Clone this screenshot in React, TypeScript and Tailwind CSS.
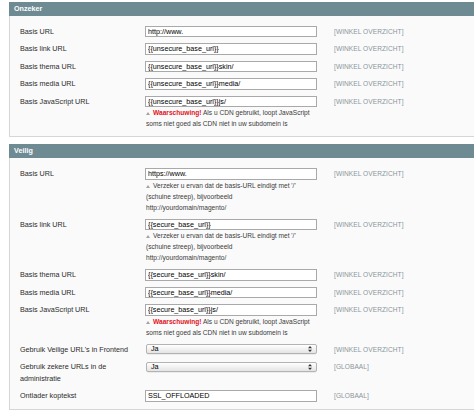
import React from "react";

type Row = {
  label: string;
  value: string;
  scope: string;
  kind?: "input" | "select";
  hint?: "base" | "cdn";
};

const onzeker: Row[] = [
  { label: "Basis URL", value: "http://www.", scope: "[WINKEL OVERZICHT]" },
  { label: "Basis link URL", value: "{{unsecure_base_url}}", scope: "[WINKEL OVERZICHT]" },
  { label: "Basis thema URL", value: "{{unsecure_base_url}}skin/", scope: "[WINKEL OVERZICHT]" },
  { label: "Basis media URL", value: "{{unsecure_base_url}}media/", scope: "[WINKEL OVERZICHT]" },
  { label: "Basis JavaScript URL", value: "{{unsecure_base_url}}js/", scope: "[WINKEL OVERZICHT]", hint: "cdn" },
];

const veilig: Row[] = [
  { label: "Basis URL", value: "https://www.", scope: "[WINKEL OVERZICHT]", hint: "base" },
  { label: "Basis link URL", value: "{{secure_base_url}}", scope: "[WINKEL OVERZICHT]", hint: "base" },
  { label: "Basis thema URL", value: "{{secure_base_url}}skin/", scope: "[WINKEL OVERZICHT]" },
  { label: "Basis media URL", value: "{{secure_base_url}}media/", scope: "[WINKEL OVERZICHT]" },
  { label: "Basis JavaScript URL", value: "{{secure_base_url}}js/", scope: "[WINKEL OVERZICHT]", hint: "cdn" },
  { label: "Gebruik Veilige URL's in Frontend", value: "Ja", scope: "[WINKEL OVERZICHT]", kind: "select" },
  { label: "Gebruik zekere URLs in de administratie", value: "Ja", scope: "[GLOBAAL]", kind: "select" },
  { label: "Ontlader koptekst", value: "SSL_OFFLOADED", scope: "[GLOBAAL]" },
];

export default function App() {
  return (
    <div className="h-[414px] w-[474px] overflow-hidden bg-white pl-[9px] pt-[1.5px] font-['Liberation_Sans',Arial,sans-serif]">
      <Section title="Onzeker" rows={onzeker} />
      <Section title="Veilig" rows={veilig} className="mt-[7px]" />
    </div>
  );
}

function Section({
  title,
  rows,
  className = "",
}: {
  title: string;
  rows: Row[];
  className?: string;
}) {
  return (
    <div className={`w-[520px] ${className}`}>
      <div className="h-[14px] bg-[#6e8a93] px-[5px] text-[7.2px] font-bold leading-[14px] text-white">
        {title}
      </div>
      <div className="border border-t-0 border-[#d6d6d6] bg-[#fafafa] pb-[4px] pt-[7px]">
        {rows.map((r) => (
          <FieldRow key={r.label} row={r} />
        ))}
      </div>
    </div>
  );
}

function FieldRow({ row }: { row: Row }) {
  return (
    <div className="flex py-[3px]">
      <div className="w-[135px] shrink-0 pl-[10px] pr-[10px] text-[7.2px] leading-[11.5px] text-[#2b2b2b]">
        {row.label}
      </div>
      <div className="w-[189px] shrink-0">
        {row.kind === "select" ? (
          <SelectBox value={row.value} />
        ) : (
          <input
            readOnly
            value={row.value}
            className="block h-[11.5px] w-[172px] border border-[#a9a9a9] bg-white px-[2px] text-[7.2px] leading-[9.5px] text-black outline-none"
          />
        )}
        {row.hint === "base" && (
          <Hint>
            Verzeker u ervan dat de basis-URL eindigt met '/'
            <br />
            (schuine streep), bijvoorbeeld
            <br />
            http://yourdomain/magento/
          </Hint>
        )}
        {row.hint === "cdn" && (
          <Hint>
            <span className="font-bold text-[#e0141e]">Waarschuwing!</span> Als u CDN gebruikt, loopt JavaScript
            <br />
            soms niet goed als CDN niet in uw subdomein is
          </Hint>
        )}
      </div>
      <div className="text-[6.6px] leading-[11.5px] tracking-[0.05px] text-[#8a969b]">
        {row.scope}
      </div>
    </div>
  );
}

function Hint({ children }: { children: React.ReactNode }) {
  return (
    <div className="w-[190px] whitespace-nowrap pl-[1px] text-[6.6px] leading-[11px] text-[#3a3a3a]">
      <svg
        width="4"
        height="3"
        viewBox="0 0 4 3"
        className="mr-[3px] inline-block align-baseline"
      >
        <path d="M2 0 L4 3 L0 3 Z" fill="#a3a3a3" />
      </svg>
      {children}
    </div>
  );
}

function SelectBox({ value }: { value: string }) {
  return (
    <div className="ml-[1px] mt-[0.75px] flex h-[10px] w-[171px] items-center justify-between rounded-[2px] border border-[#b3b3b3] bg-gradient-to-b from-white to-[#e4e4e4] pl-[4px] pr-[4px] text-[7.2px] text-black shadow-[0_0.5px_0.5px_rgba(0,0,0,0.12)]">
      <span className="leading-[8px]">{value}</span>
      <svg width="4" height="6" viewBox="0 0 4 6">
        <path d="M2 0 L4 2.3 L0 2.3 Z" fill="#333" />
        <path d="M2 6 L4 3.7 L0 3.7 Z" fill="#333" />
      </svg>
    </div>
  );
}
